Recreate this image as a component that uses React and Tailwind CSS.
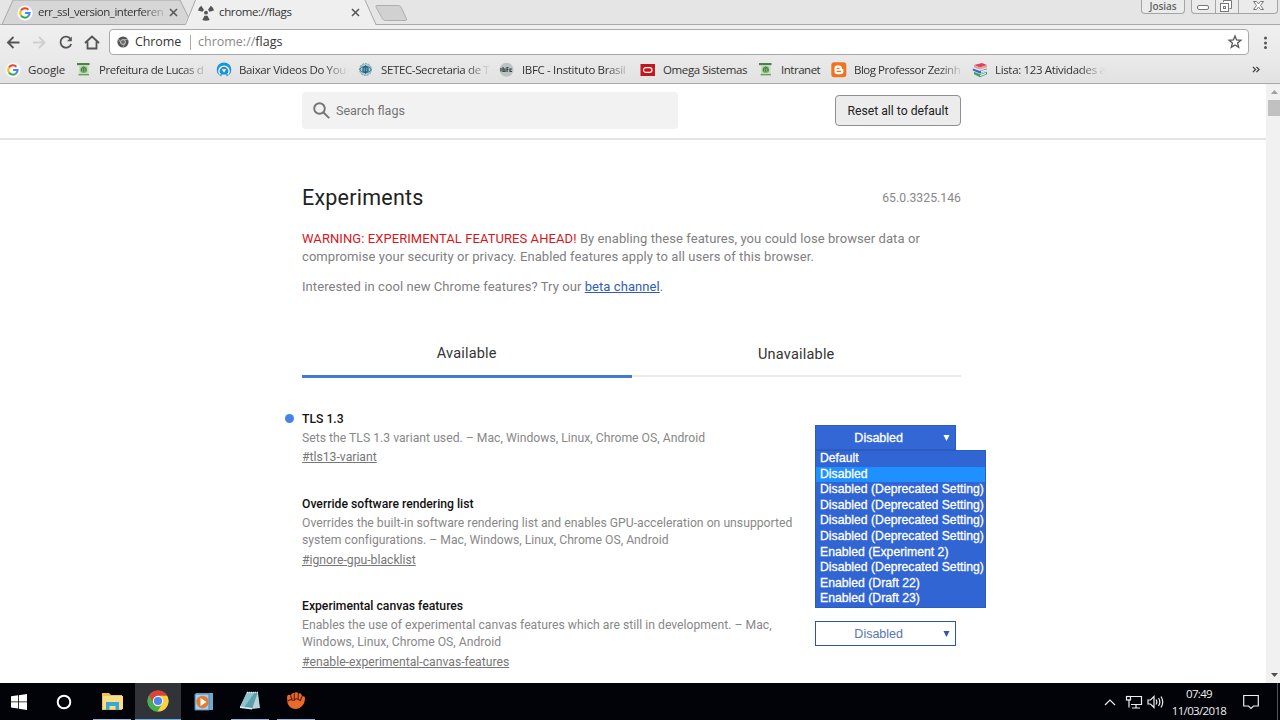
import { useState } from "react";

const bookmarks = [
  { label: "Google", icon: "google", className: "w-[71px] tracking-[-0.100px]" },
  { label: "Prefeitura de Lucas d", icon: "pref", className: "w-[140px] tracking-[-0.440px]", fade: true },
  { label: "Baixar Videos Do You", icon: "baixar", className: "w-[142px] tracking-[-0.360px]", fade: true },
  { label: "SETEC-Secretaria de T", icon: "setec", className: "w-[141px] tracking-[-0.370px]", fade: true },
  { label: "IBFC - Instituto Brasil", icon: "ibfc", className: "w-[141px] tracking-[-0.340px]", fade: true },
  { label: "Omega Sistemas", icon: "omega", className: "w-[118px] tracking-[-0.390px]" },
  { label: "Intranet", icon: "pref", className: "w-[73px] tracking-[-0.480px]" },
  { label: "Blog Professor Zezinh", icon: "blogger", className: "w-[141px] tracking-[-0.480px]", fade: true },
  { label: "Lista: 123 Atividades a", icon: "books", className: "w-[141px] tracking-[-0.340px]", fade: true },
];

const options = [
  "Default",
  "Disabled",
  "Disabled (Deprecated Setting)",
  "Disabled (Deprecated Setting)",
  "Disabled (Deprecated Setting)",
  "Disabled (Deprecated Setting)",
  "Enabled (Experiment 2)",
  "Disabled (Deprecated Setting)",
  "Enabled (Draft 22)",
  "Enabled (Draft 23)",
];

const GoogleIcon = () => (
  <svg width="16" height="16" viewBox="0 0 16 16" className="shrink-0">
    <circle cx="8" cy="8" r="7.6" fill="#fafafa" />
    <g fill="none" strokeWidth="2">
      <path d="M11.4 4.7A4.7 4.7 0 0 0 4 5.5" stroke="#ea4335" />
      <path d="M4 5.5a4.7 4.7 0 0 0 0 5" stroke="#fbbc05" />
      <path d="M4 10.5a4.7 4.7 0 0 0 7 1" stroke="#34a853" />
      <path d="M11 11.5A4.7 4.7 0 0 0 12.6 8H8.1" stroke="#4285f4" />
    </g>
  </svg>
);

const icons = {
  google: <GoogleIcon />,
  pref: (
    <svg width="16" height="16" viewBox="0 0 16 16" className="shrink-0">
      <path d="M1 1h12.500v2.200H1z" fill="#4c8147" />
      <path d="M3 4h9.500v8H3z" fill="#c3dcb9" />
      <circle cx="7.700" cy="7.700" r="3.400" fill="#7fb374" />
      <path d="M5.500 9.500V6.500L7.700 5l2.300 1.500v3M7.700 6v4" fill="none" stroke="#3f7a3c" />
      <path d="M2.500 12.700h10.500" stroke="#68a25d" strokeWidth="1.400" />
    </svg>
  ),
  baixar: (
    <svg width="16" height="16" viewBox="0 0 16 16" className="shrink-0">
      <circle cx="8" cy="7.700" r="7.300" fill="#1a94d6" />
      <path d="M4.300 12.500A5 5 0 1 1 11.700 12.500" fill="none" stroke="#fff" strokeWidth="1.500" />
      <path d="M5.500 12.500h5v3h-5z" fill="#e6e6e6" />
      <path d="M5.700 7.200h4.600L8 10.500z" fill="#fff" />
    </svg>
  ),
  setec: (
    <svg width="16" height="16" viewBox="0 0 16 16" className="shrink-0">
      <circle cx="7.500" cy="7.500" r="6" fill="#a9cbd3" stroke="#6c9fae" strokeDasharray="2 1" />
      <ellipse cx="7.500" cy="7.500" rx="5.500" ry="3" fill="none" stroke="#2c6a85" />
      <rect x="5" y="5" width="5" height="5" rx="1" fill="#5f9cb8" stroke="#215878" />
      <path d="M7.500 3v9" stroke="#215878" strokeWidth=".8" />
    </svg>
  ),
  ibfc: (
    <svg width="16" height="16" viewBox="0 0 16 16" className="shrink-0">
      <circle cx="7.500" cy="7.700" r="7" fill="#bcc3c2" />
      <path d="M2 6v3.500M4 5v4.500h2V7H4M8 10V5.500h1.500M7.500 7.500h2M13 7h-2v2.500h2" fill="none" stroke="#2e4240" strokeWidth="1.200" />
    </svg>
  ),
  omega: (
    <svg width="16" height="16" viewBox="0 0 16 16" className="shrink-0">
      <rect x=".5" y="2" width="14.500" height="12" fill="#c4161c" />
      <rect x="3.500" y="5.700" width="8.500" height="4.600" rx="2.300" fill="none" stroke="#fff" strokeWidth="1.200" />
    </svg>
  ),
  blogger: (
    <svg width="16" height="16" viewBox="0 0 16 16" className="shrink-0">
      <rect x=".3" y=".3" width="15" height="15" rx="3" fill="#ef7420" />
      <path d="M6 3.500h2.300a2.500 2.500 0 0 1 2.500 2.500c0 .8.300 1 .9 1 .4 0 .7.300.7.700V9.500a2.700 2.700 0 0 1-2.700 2.700H6.200a2.700 2.700 0 0 1-2.700-2.700V6A2.500 2.500 0 0 1 6 3.500z" fill="#fff" />
      <path d="M6.200 6.300h1.800M6.200 9.400h3.300" stroke="#ef7420" strokeWidth="1.200" strokeLinecap="round" />
    </svg>
  ),
  books: (
    <svg width="16" height="16" viewBox="0 0 16 16" className="shrink-0">
      <path d="M2 3 10 1l5 2-7 2.500z" fill="#dc4553" />
      <path d="M2 3v2.500l6 2V5.500zM8 5.500 15 3v2.200L8 7.500" fill="#eb9da4" />
      <path d="M.8 6.500 8 9l7-2.500v2L8 11.500.8 8.500z" fill="#2f6fbd" />
      <path d="M9 9l6-1.700v1.500L9 10.800z" fill="#e8eef5" />
      <path d="M2 9.800 8 12.300l7-2.500v2.500l-7 3-6-3z" fill="#43a06a" />
      <path d="M8 13l6-2.200v1.200L8 14.300z" fill="#eef7f0" />
    </svg>
  ),
};

const TabClose = () => (
  <svg width="9" height="9" viewBox="0 0 9 9" className="shrink-0" stroke="#555" strokeWidth="1.500">
    <path d="M1 1l7 7M8 1L1 8" />
  </svg>
);

const TabStrip = () => (
  <div className="relative flex h-[25px] items-center bg-[#e5e5e5]">
    <svg width="1280" height="25" className="absolute inset-0">
      <path d="M0 24.500H1280" stroke="#b3b3b3" />
      <path d="M2 24.500 13 0H180l12 24.500z" fill="#d6d6d6" stroke="#a8a8a8" />
      <path d="M184 25.500 195.500 0H365l11 25.500z" fill="#efefef" />
      <path d="M184 24.500h1.500L195.500 0M365 0l11 24.500H1280" fill="none" stroke="#a8a8a8" />
      <path d="M376.500 5.500h22q2 0 2.800 2l5 11q1 2-1 2h-20q-2 0-3-2l-6-11q-1-2 .2-2z" fill="#d1d1d1" stroke="#aeaeae" />
    </svg>
    <div className="relative flex h-6 w-[180px] items-center pl-[17px]">
      <GoogleIcon />
      <span className="ml-[5px] w-[126px] whitespace-nowrap pb-px text-[11.500px] tracking-[-0.480px] text-[#333] [mask-image:linear-gradient(to_right,#000_104px,transparent_130px)]">
        err_ssl_version_interferen
      </span>
      <span className="ml-[5px]"><TabClose /></span>
    </div>
    <div className="relative flex h-6 w-[190px] items-center pl-[18px]">
      <svg width="16" height="16" viewBox="0 0 16 16" fill="#555" className="shrink-0">
        <circle cx="8" cy="7.700" r="1.900" />
        <path d="M0 5.500Q.8 2.500 3.200 .8L6 4.800 4.500 6.800zM16 5.500Q15.200 2.500 12.800 .8L10 4.800l1.500 2zM6.500 10.700h3L11.700 15q-3.700 1.300-7.400 0z" />
      </svg>
      <span className="ml-[5px] w-[132px] pb-px text-[11.500px] tracking-[-0.360px] text-[#333]">chrome://flags</span>
      <TabClose />
    </div>
    {/* window buttons */}
    <div className="relative mb-auto ml-auto mr-[2px] flex h-[14px] text-[10px] leading-[12px] text-[#666]">
      <div className="mr-[6px] w-[44px] rounded-b border border-t-0 border-[#a5a5a5] bg-[#ebebeb] text-center font-semibold tracking-[-0.100px]">
        Josias
      </div>
      <div className="flex w-[87px] rounded-b border border-t-0 border-[#a5a5a5] bg-[#ebebeb]">
        <svg width="85" height="13" fill="none" stroke="#777">
          <path d="M23.500 0v13M46.500 0v13" stroke="#a5a5a5" />
          <rect x="5.500" y="5.500" width="11" height="4" rx="1.500" fill="#fff" />
          <path d="M31.500 2V.5h8v8h-2" fill="#fff" />
          <rect x="28.500" y="3.500" width="8" height="8" fill="#fff" />
          <rect x="31.500" y="6.500" width="2" height="2" />
          <path d="M61.500 1.500h3l2 2.500 2-2.500h3L68.500 5.500l3 4h-3l-2-2.500-2 2.500h-3l3-4z" fill="#fff" />
        </svg>
      </div>
    </div>
  </div>
);

const Toolbar = () => (
  <div className="flex h-[31px] items-center bg-gradient-to-b from-[#efefef] to-[#eaeaea]">
    <svg width="109" height="31" fill="none" stroke="#555" strokeWidth="1.800">
      <path d="M19.500 17.500H8M13.500 12l-5.600 5.500 5.600 5.500" />
      <path d="M33 17.500h11.500M39 12l5.600 5.500L39 23" stroke="#cfcfcf" />
      <path d="M70.500 14a5.500 5.500 0 1 0 .7 5" />
      <path d="M71.800 11.500v4.800H67z" fill="#555" stroke="none" />
      <path d="M85 18l7-6.500 7 6.500M87.500 16.500V23.500h9v-7" />
    </svg>
    <div className="mt-[3px] flex h-[26px] w-[1140px] items-center rounded-sm border border-[#a9a9a9] bg-white pl-[7px] pr-[5px]">
      <svg width="12" height="12" viewBox="0 0 12 12">
        <circle cx="6" cy="6" r="5.600" fill="#555" />
        <circle cx="6" cy="6" r="2.400" fill="#666" stroke="#ddd" strokeWidth=".9" />
        <path d="M6 3.600h5M3.900 7.200 1.500 3M8.100 7.200 5.800 11.500" stroke="#bbb" strokeWidth=".8" />
      </svg>
      <span className="ml-[6px] w-[55px] pt-px text-[12.500px] tracking-[-0.100px] text-[#333]">Chrome</span>
      <span className="h-[15px] w-px bg-[#aaa]" />
      <span className="ml-[7px] pt-px text-[12.500px] text-[#8a8a8a]">
        chrome://<span className="text-[#333]">flags</span>
      </span>
      <svg width="16" height="16" viewBox="0 0 16 16" className="ml-auto" fill="none" stroke="#555" strokeWidth="1.300">
        <path d="M8 2l1.600 4 4.300.3-3.300 2.800 1.100 4.200L8 11l-3.700 2.300 1.100-4.200L2.100 6.300 6.400 6z" />
      </svg>
    </div>
    <svg width="31" height="31" fill="#555">
      <circle cx="16.500" cy="13" r="1.500" />
      <circle cx="16.500" cy="18" r="1.500" />
      <circle cx="16.500" cy="22.500" r="1.500" />
    </svg>
  </div>
);

const BookmarksBar = () => (
  <div className="flex h-[28px] items-center border-b border-[#a8a8a8] bg-gradient-to-b from-[#eaeaea] to-[#e2e2e2] pl-[5px] text-[11.500px] text-[#333]">
    {bookmarks.map((b, idx) => (
      <div key={idx} className={`flex shrink-0 items-center gap-[7px] ${b.className}`}>
        {icons[b.icon]}
        <span
          className={
            b.fade
              ? "w-[110px] whitespace-nowrap [mask-image:linear-gradient(to_right,#000_84px,transparent_110px)]"
              : "whitespace-nowrap"
          }
        >
          {b.label}
        </span>
      </div>
    ))}
    <svg width="8" height="7" viewBox="0 0 9 8" className="ml-auto mr-[20px]" fill="none" stroke="#444" strokeWidth="1.500">
      <path d="M1 1l3 3-3 3M5 1l3 3-3 3" />
    </svg>
  </div>
);

const Flag = ({ title, lines, link, className, linkClass = "mt-[2px]", modified }) => (
  <div className={`relative w-[513px] text-[12.200px] ${className}`}>
    {modified && <span className="absolute -left-[17px] top-[4px] size-[9px] rounded-full bg-[#4583ea]" />}
    <h3 className="font-medium leading-[18px] text-[#111]">{title}</h3>
    <div className="mt-[2px] leading-[17px] tracking-[0.010px] text-[#888]">
      {lines.map((l, idx) => (
        <p key={idx} className="whitespace-nowrap">{l}</p>
      ))}
    </div>
    <a className={`block leading-[18px] text-[#777] underline ${linkClass}`}>{link}</a>
  </div>
);

const Taskbar = () => (
  <div className="flex h-[37px] bg-[#020308] text-white">
    <div className="flex w-[38px] items-center justify-center">
      <svg width="16" height="16" viewBox="0 0 16 16" fill="#fff">
        <path d="M0 2.300 7 1.300V7.500H0zM7.800 1.200 16 0v7.500H7.800zM0 8.300h7v6.200l-7-1zM7.800 8.300H16V16l-8.200-1.300z" />
      </svg>
    </div>
    <div className="flex w-[52px] items-center justify-center">
      <svg width="16" height="16" fill="none" stroke="#fff" strokeWidth="2">
        <circle cx="8" cy="8" r="6.300" />
      </svg>
    </div>
    <div className="mx-[3px] flex w-[38px] items-center justify-center border-b border-[#8fb8d6]">
      <svg width="21" height="19" viewBox="0 0 21 19">
        <path d="M0 1h7l2 2h11v15H0z" fill="#e9c45a" />
        <path d="M1 4h20v13H1z" fill="#f9dd88" />
        <path d="M4 10h13v8h-3.500v-4h-6v4H4z" fill="#38a9d4" />
      </svg>
    </div>
    <div className="ml-[1px] flex w-[46px] items-center justify-center border-b border-[#6cb0ea] bg-[#313338]">
      <svg width="22" height="22" viewBox="0 0 22 22">
        <circle cx="11" cy="11" r="10.500" fill="#4aae50" />
        <path d="M11 11 1.900 5.700A10.500 10.500 0 0 1 20.100 5.700z" fill="#dc4437" />
        <path d="M11 11V5.700h9.100A10.500 10.500 0 0 1 10.500 21.500z" fill="#fdd040" />
        <path d="M1.900 5.700 6.500 13.600 11 11V6z" fill="#dc4437" />
        <path d="M1.900 5.700A10.500 10.500 0 0 0 10.500 21.500L15.400 13.500 11 15.500 6.500 13.600z" fill="#4aae50" />
        <circle cx="11" cy="11" r="5.200" fill="#f4f4f4" />
        <circle cx="11" cy="11" r="4.100" fill="#4a87ee" />
      </svg>
    </div>
    <div className="flex w-[46px] items-center justify-center">
      <svg width="20" height="20" viewBox="0 0 20 20">
        <path d="M2 1h17v17H2z" fill="#6fa9d2" />
        <path d="M1 2h14v16H1z" fill="#a8cfe9" stroke="#4f86b3" />
        <circle cx="8.500" cy="10" r="6.200" fill="#e07b35" />
        <path d="M6.500 6v8l6-4z" fill="#fff" />
      </svg>
    </div>
    <div className="ml-[4px] flex w-[38px] items-center justify-center border-b border-[#8fb8d6]">
      <svg width="22" height="20" viewBox="0 0 22 20">
        <path d="M14 2h5l2 15-8 1z" fill="#b9d3d8" />
        <path d="M8 1h11l-6 17L1 16z" fill="#5f9eab" />
        <path d="M8 1h8L5 16.500 1 16z" fill="#8ec4cc" />
        <path d="M1 15.500l12 1.500v1.500L1 17z" fill="#e7f3f5" />
        <path d="M8 1.500h11" stroke="#e9eff0" strokeWidth="1.500" strokeDasharray="1 1" />
      </svg>
    </div>
    <div className="ml-[8px] flex w-[38px] items-center justify-center border-b border-[#8fb8d6]">
      <svg width="20" height="18" viewBox="0 0 20 18">
        <path d="M1 5q.5-3 3-2l1 .5Q5.500.5 7.500 1l1 .5Q10-.5 12 1l.5 1q2-1.500 3 .5L16 4.500q3-1 3 1.500 0 5-3 8-3 3.500-6.500 3Q3 16.500 1.500 11z" fill="#e9692b" />
        <path d="M4.500 3.500 6 7.500M8.300 2v5.500M12.300 2 12 7.500M15.800 4.500 14.500 8M2 9q2-2 4-1t3-.5 3.500 0T15 9" fill="none" stroke="#65200d" strokeWidth="1.200" />
      </svg>
    </div>
    <div className="ml-auto flex items-center">
      <svg width="64" height="20" fill="none" stroke="#eee" strokeWidth="1.200">
        <path d="M4 13l5-5 5 5" />
        <path d="M30 4.500h10.500v8H30M28 7.500v8M35 13v3M31 16h8" />
        <rect x="25.500" y="4.500" width="4" height="3.500" />
        <path d="M47 8h2.500l3.500-3.500v11L49.500 12H47zM55 7.500q1.700 2.500 0 5M57.500 6q2.700 4 0 8M60 4.500q3.500 5.500 0 11" />
      </svg>
      <div className="ml-[5px] w-[58px] text-center text-[11.500px] leading-[17px] tracking-[-0.650px] text-[#eee]">
        <p>07:49</p>
        <p>11/03/2018</p>
      </div>
      <svg width="16" height="16" viewBox="0 0 16 16" className="ml-[15px]" fill="none" stroke="#eee" strokeWidth="1.200">
        <path d="M.7 1.500h14.600v10.500H10.500L8 14.500 5.500 12H.7z" />
      </svg>
      <span className="ml-[18px] mr-[2px] h-[37px] w-px bg-[#555]" />
    </div>
  </div>
);

const App = () => {
  const [open, setOpen] = useState(true);
  const [selected, setSelected] = useState(1);

  return (
    <div className="flex h-[720px] w-[1280px] flex-col overflow-hidden bg-white font-['Open_Sans',sans-serif]">
      <TabStrip />
      <Toolbar />
      <BookmarksBar />

      <div className="flex h-[599px] font-['Roboto',sans-serif]">
        <div className="w-[1266px]">
          <div className="flex h-[56px] border-b-2 border-[#e4e4e4] pl-[302px] pt-[8px]">
            <div className="flex h-[37px] w-[376px] items-center rounded-sm bg-[#f2f2f2] pl-[11px]">
              <svg width="17" height="17" viewBox="0 0 17 17" fill="none" stroke="#757575" strokeWidth="1.900">
                <circle cx="6.500" cy="6.500" r="5.300" />
                <path d="M10.500 10.500l5.700 5.700" />
              </svg>
              <span className="ml-[6px] pt-[2px] text-[12.500px] text-[#757575]">Search flags</span>
            </div>
            <button className="ml-[157px] mt-[3px] h-[31px] w-[126px] rounded-sm border border-[#8f8f8f] bg-[#ececec] pt-px text-[12.200px] text-[#222]">
              Reset all to default
            </button>
          </div>

          <div className="ml-[302px] w-[659px]">
            <div className="flex items-center justify-between pt-[44px]">
              <h1 className="text-[21.500px] leading-[28px] tracking-[0.220px] text-[#222]">Experiments</h1>
              <span className="pt-px text-[12.200px] tracking-[0.050px] text-[#888]">65.0.3325.146</span>
            </div>
            <div className="mt-[18px] text-[13px] leading-[18px] tracking-[0.075px] text-[#808080]">
              <p className="whitespace-nowrap">
                <span className="text-[#d8151b]">WARNING: EXPERIMENTAL FEATURES AHEAD!</span> By enabling these features, you could lose browser data or
              </p>
              <p className="whitespace-nowrap">compromise your security or privacy. Enabled features apply to all users of this browser.</p>
              <p className="mt-[12px]">
                Interested in cool new Chrome features? Try our <a className="text-[#2f5cb8] underline">beta channel</a>.
              </p>
            </div>

            <div className="mt-[41px] flex h-[41px] text-center text-[14.500px] leading-[33px] tracking-[0.200px] text-[#333]">
              <div className="w-[329.500px] border-b-[3px] border-[#4179d0]">Available</div>
              <div className="h-[40px] flex-1 border-b-2 border-[#ebebeb] pt-px">Unavailable</div>
            </div>

            <div className="flex">
              <div>
                <Flag
                  className="mt-[32px]"
                  linkClass="mt-px"
                  modified
                  title="TLS 1.3"
                  lines={["Sets the TLS 1.3 variant used. – Mac, Windows, Linux, Chrome OS, Android"]}
                  link="#tls13-variant"
                />
                <Flag
                  className="mt-[29px]"
                  title="Override software rendering list"
                  lines={[
                    "Overrides the built-in software rendering list and enables GPU-acceleration on unsupported",
                    "system configurations. – Mac, Windows, Linux, Chrome OS, Android",
                  ]}
                  link="#ignore-gpu-blacklist"
                />
                <Flag
                  className="mt-[28px]"
                  title="Experimental canvas features"
                  lines={[
                    "Enables the use of experimental canvas features which are still in development. – Mac,",
                    "Windows, Linux, Chrome OS, Android",
                  ]}
                  link="#enable-experimental-canvas-features"
                />
              </div>

              <div className="relative flex flex-col pt-[47px] font-['Liberation_Sans',sans-serif] text-[12.500px]">
                <button
                  onClick={() => setOpen(!open)}
                  className="flex h-[25px] w-[141px] items-center justify-end border border-[#2c5cc0] bg-[#3367d6] pr-[5px] text-white"
                >
                  <span className="mr-[40px] pt-px [-webkit-text-stroke:0.300px]">{options[selected].split(" ")[0]}</span>
                  <svg width="7" height="6"><path d="M.5 0h6L3.500 6z" fill="#fff" /></svg>
                </button>
                {open && (
                  <ul className="absolute left-0 top-[72px] h-[158px] w-[171px] border border-[#2c5cc0] bg-[#3165d4] text-[12.200px] leading-[15.600px] tracking-[0.020px] text-white [-webkit-text-stroke:0.300px]">
                    {options.map((o, idx) => (
                      <li
                        key={idx}
                        onClick={() => setSelected(idx)}
                        className={`h-[15.600px] whitespace-nowrap pl-[4px] ${idx === selected ? "bg-[#1e90ff]" : ""}`}
                      >
                        {o}
                      </li>
                    ))}
                  </ul>
                )}
                <button className="mt-[171px] flex h-[25px] w-[141px] items-center justify-end border border-[#2b55a8] bg-white pr-[5px] text-[#5874b5]">
                  <span className="mr-[40px] pt-px">Disabled</span>
                  <svg width="7" height="6"><path d="M.5 0h6L3.500 6z" fill="#2f58ae" /></svg>
                </button>
              </div>
            </div>
          </div>
        </div>

        {/* scrollbar */}
        <div className="flex w-[14px] flex-col items-center bg-[#f1f1f1] pl-[2px]">
          <svg width="7" height="4" className="mt-[6px]"><path d="M0 4 3.500 0 7 4z" fill="#a0a0a0" /></svg>
          <div className="mt-[6px] h-[16px] w-full bg-[#c1c1c1]" />
          <svg width="7" height="4" className="mb-[6px] mt-auto"><path d="M0 0h7L3.500 4z" fill="#505050" /></svg>
        </div>
      </div>

      <Taskbar />
    </div>
  );
};

export default App;
